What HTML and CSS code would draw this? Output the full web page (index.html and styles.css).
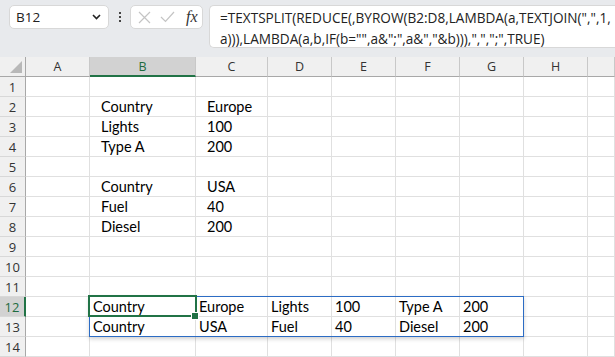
FILE: index.html
```html
<!DOCTYPE html>
<html lang="en">
<head>
  <meta charset="UTF-8" />
  <title>TEXTSPLIT REDUCE</title>
  <link rel="stylesheet" href="styles.css">
</head>
<body>
  <div class="topbar">
    <div class="namebox">
      <span>B12</span>
      <svg width="9" height="6" viewBox="0 0 9 6"><path d="M1 1 L4.5 4.5 L8 1" fill="none" stroke="#222" stroke-width="1.6"/></svg>
    </div>
    <div class="dots"><i></i><i></i><i></i></div>
    <div class="fxbox">
      <svg width="13" height="13" viewBox="0 0 13 13"><path d="M1 1 L12 12 M12 1 L1 12" stroke="#c4c4c4" stroke-width="1.2"/></svg>
      <svg width="15" height="12" viewBox="0 0 15 12"><path d="M1 6 L5.5 10.5 L14 1" fill="none" stroke="#c4c4c4" stroke-width="1.2"/></svg>
      <span class="fx">fx</span>
    </div>
    <div class="formula">=TEXTSPLIT(REDUCE(,BYROW(B2:D8,LAMBDA(a,TEXTJOIN(",",1,<br>a))),LAMBDA(a,b,IF(b="",a&amp;";",a&amp;","&amp;b))),",",";",TRUE)</div>
  </div>

  <div class="sheet" id="sheet">
    <div class="spill"></div>
    <div class="selection"><span class="handle"></span></div>
  </div>

  <script>
    const cols = ["A", "B", "C", "D", "E", "F", "G", "H", ""];
    const data = {
      2: { B: " Country", C: " Europe" },
      3: { B: " Lights", C: " 100" },
      4: { B: " Type A", C: " 200" },
      6: { B: " Country", C: " USA" },
      7: { B: " Fuel", C: " 40" },
      8: { B: " Diesel", C: " 200" },
      12: { B: "Country", C: "Europe", D: "Lights", E: "100", F: "Type A", G: "200" },
      13: { B: "Country", C: "USA", D: "Fuel", E: "40", F: "Diesel", G: "200" }
    };
    const sheet = document.getElementById("sheet");

    function addCell(cls, text) {
      const el = document.createElement("div");
      el.className = cls;
      if (text && text.startsWith(" ")) {
        el.classList.add("indent");
        text = text.trim();
      }
      el.textContent = text || "";
      sheet.appendChild(el);
    }

    addCell("corner");
    cols.forEach(c => addCell(c === "B" ? "colhead active" : "colhead", c));

    for (let r = 1; r <= 14; r++) {
      addCell(r === 12 ? "rowhead active" : "rowhead", String(r));
      cols.forEach(c => addCell("cell", (data[r] || {})[c]));
    }
  </script>
</body>
</html>
```

FILE: styles.css
```css
body {
  margin: 0;
  width: 615px;
  height: 357px;
  overflow: hidden;
  background: #ffffff;
  font-family: "Open Sans", "Noto Sans", sans-serif;
}

.topbar {
  height: 57px;
  background: #e8eaed;
  display: flex;
  align-items: flex-start;
  padding: 5px 0 0 9px;
  box-sizing: border-box;
}

.namebox {
  width: 100px;
  height: 24px;
  box-sizing: border-box;
  background: #fff;
  border: 1px solid #d8d8d8;
  border-radius: 5px;
  display: flex;
  align-items: center;
  justify-content: space-between;
  padding: 0 7px 0 6px;
  font-size: 13.5px;
  color: #222;
}

.dots {
  width: 21px;
  height: 24px;
  display: flex;
  flex-direction: column;
  align-items: center;
  justify-content: center;
  gap: 2px;
}

.dots i {
  width: 2px;
  height: 2px;
  background: #444;
}

.fxbox {
  width: 73px;
  height: 24px;
  box-sizing: border-box;
  background: #fff;
  border: 1px solid #d8d8d8;
  border-radius: 5px;
  display: flex;
  align-items: center;
  gap: 9px;
  padding-left: 7px;
}

.fx {
  font-family: "Liberation Serif", serif;
  font-style: italic;
  font-size: 16px;
  color: #333;
  margin-left: 2px;
}

.formula {
  margin-left: 6px;
  flex: 1;
  height: 43px;
  box-sizing: border-box;
  background: #fff;
  border: 1px solid #d8d8d8;
  border-right: none;
  border-radius: 5px 0 0 5px;
  padding: 1px 0 0 10px;
  font-size: 13.6px;
  line-height: 21px;
  color: #222;
  white-space: nowrap;
  overflow: hidden;
}

.sheet {
  position: relative;
  display: grid;
  grid-template-columns: 26px 64px 106px 72px 64px 64px 64px 64px 64px 1fr;
  grid-auto-rows: 20px;
}

.sheet > div {
  box-sizing: border-box;
}

.corner, .colhead, .rowhead {
  background: #f0f0f0;
  color: #333;
  font-size: 12.5px;
  display: flex;
  align-items: center;
  justify-content: center;
}

.corner {
  border-right: 1px solid #a8a8a8;
  border-bottom: 1px solid #a8a8a8;
  position: relative;
}

.corner::after {
  content: "";
  position: absolute;
  right: 3px;
  bottom: 3px;
  border-left: 12px solid transparent;
  border-bottom: 12px solid #b8b8b8;
}

.colhead {
  border-right: 1px solid #c8c8c8;
  border-bottom: 1px solid #a8a8a8;
}

.rowhead {
  border-right: 1px solid #a8a8a8;
  border-bottom: 1px solid #d8d8d8;
  font-size: 13px;
}

.colhead.active {
  background: #d2d2d2;
  color: #1e6b3f;
  border-bottom: 2px solid #217346;
}

.rowhead.active {
  background: #d2d2d2;
  color: #1e6b3f;
  border-right: 2px solid #217346;
}

.cell {
  border-right: 1px solid #e0e0e0;
  border-bottom: 1px solid #e0e0e0;
  font-family: "Lato", "Open Sans", sans-serif;
  font-size: 14.5px;
  color: #000;
  line-height: 19px;
  padding-left: 3px;
  white-space: nowrap;
}

.cell.indent {
  padding-left: 11px;
}

.spill {
  position: absolute;
  left: 89px;
  top: 239px;
  width: 435px;
  height: 41px;
  border: 1px solid #2c6cc4;
  box-sizing: border-box;
  box-shadow: 0 2px 4px rgba(0, 0, 0, 0.18);
  pointer-events: none;
}

.selection {
  position: absolute;
  left: 88px;
  top: 238px;
  width: 109px;
  height: 22px;
  border: 2px solid #217346;
  box-sizing: border-box;
}

.handle {
  position: absolute;
  right: -4px;
  bottom: -5px;
  width: 6px;
  height: 6px;
  background: #217346;
  border: 1px solid #fff;
}
```
